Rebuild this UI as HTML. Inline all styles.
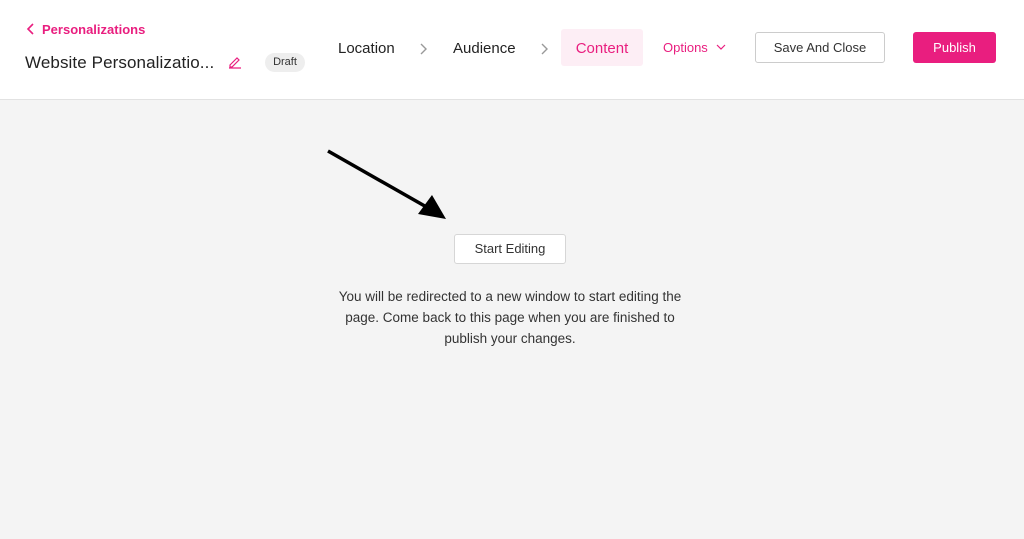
<!DOCTYPE html>
<html><head><style>
body{margin:0;width:1024px;height:539px;background:#f4f4f4;font-family:"Liberation Sans",sans-serif;position:relative;overflow:hidden;color:#333}
.hdr{position:absolute;left:0;top:0;width:1024px;height:99px;background:#fff;border-bottom:1px solid #e2e2e2}
.a{position:absolute;white-space:nowrap}
.pink{color:#e91e7f}
.btn{position:absolute;box-sizing:border-box;border:1px solid #ccc;border-radius:3px;background:#fff;font-size:13px;color:#333;text-align:center}
</style></head><body>
<div class="hdr">
<svg class="a" style="left:26px;top:23px" width="10" height="12"><path d="M7 1 L2 6 L7 11" stroke="#e91e7f" stroke-width="1.6" fill="none"/></svg>
<div class="a pink" style="left:42px;top:22px;font-size:13px;font-weight:bold">Personalizations</div>
<div class="a" style="left:25px;top:53px;font-size:17px;color:#222;letter-spacing:0.1px">Website Personalizatio...</div>
<svg class="a" style="left:228px;top:55px" width="14" height="14"><path d="M2 10 L9 3 L11 5 L4 12 L2 12 Z M1 13 H13" stroke="#e91e7f" stroke-width="1.2" fill="none"/></svg>
<div class="a" style="left:265px;top:53px;width:40px;height:19px;border-radius:10px;background:#eee;font-size:11px;line-height:19px;text-align:center">Draft</div>
<div class="a" style="left:338px;top:40px;font-size:15px;color:#222">Location</div>
<svg class="a" style="left:420px;top:43px" width="8" height="12"><path d="M1 1 L6 6 L1 11" stroke="#999" stroke-width="1.4" fill="none"/></svg>
<div class="a" style="left:453px;top:40px;font-size:15px;color:#222">Audience</div>
<svg class="a" style="left:541px;top:43px" width="8" height="12"><path d="M1 1 L6 6 L1 11" stroke="#999" stroke-width="1.4" fill="none"/></svg>
<div class="a" style="left:561px;top:29px;width:82px;height:37px;border-radius:3px;background:#fdeef5;color:#e91e7f;font-size:15px;line-height:39px;text-align:center">Content</div>
<div class="a pink" style="left:663px;top:40px;font-size:13px">Options</div>
<svg class="a" style="left:716px;top:44px" width="10" height="7"><path d="M1 1 L5 5 L9 1" stroke="#e91e7f" stroke-width="1.2" fill="none"/></svg>
<div class="btn" style="left:755px;top:32px;width:130px;height:31px;line-height:29px">Save And Close</div>
<div class="btn" style="left:913px;top:32px;width:83px;height:31px;line-height:31px;background:#e91e7f;border:none;color:#fff">Publish</div>
</div>
<svg class="a" style="left:320px;top:145px" width="135" height="85"><line x1="8" y1="6" x2="110" y2="64" stroke="#000" stroke-width="3.5"/><path d="M126 74 L98 69 L112 50 Z" fill="#000"/></svg>
<div class="btn" style="left:454px;top:234px;width:112px;height:30px;line-height:28px;border-color:#d6d6d6">Start Editing</div>
<div class="a" style="left:260px;top:286px;width:500px;text-align:center;font-size:13.5px;line-height:21px;color:#333">You will be redirected to a new window to start editing the<br>page. Come back to this page when you are finished to<br>publish your changes.</div>
</body></html>
